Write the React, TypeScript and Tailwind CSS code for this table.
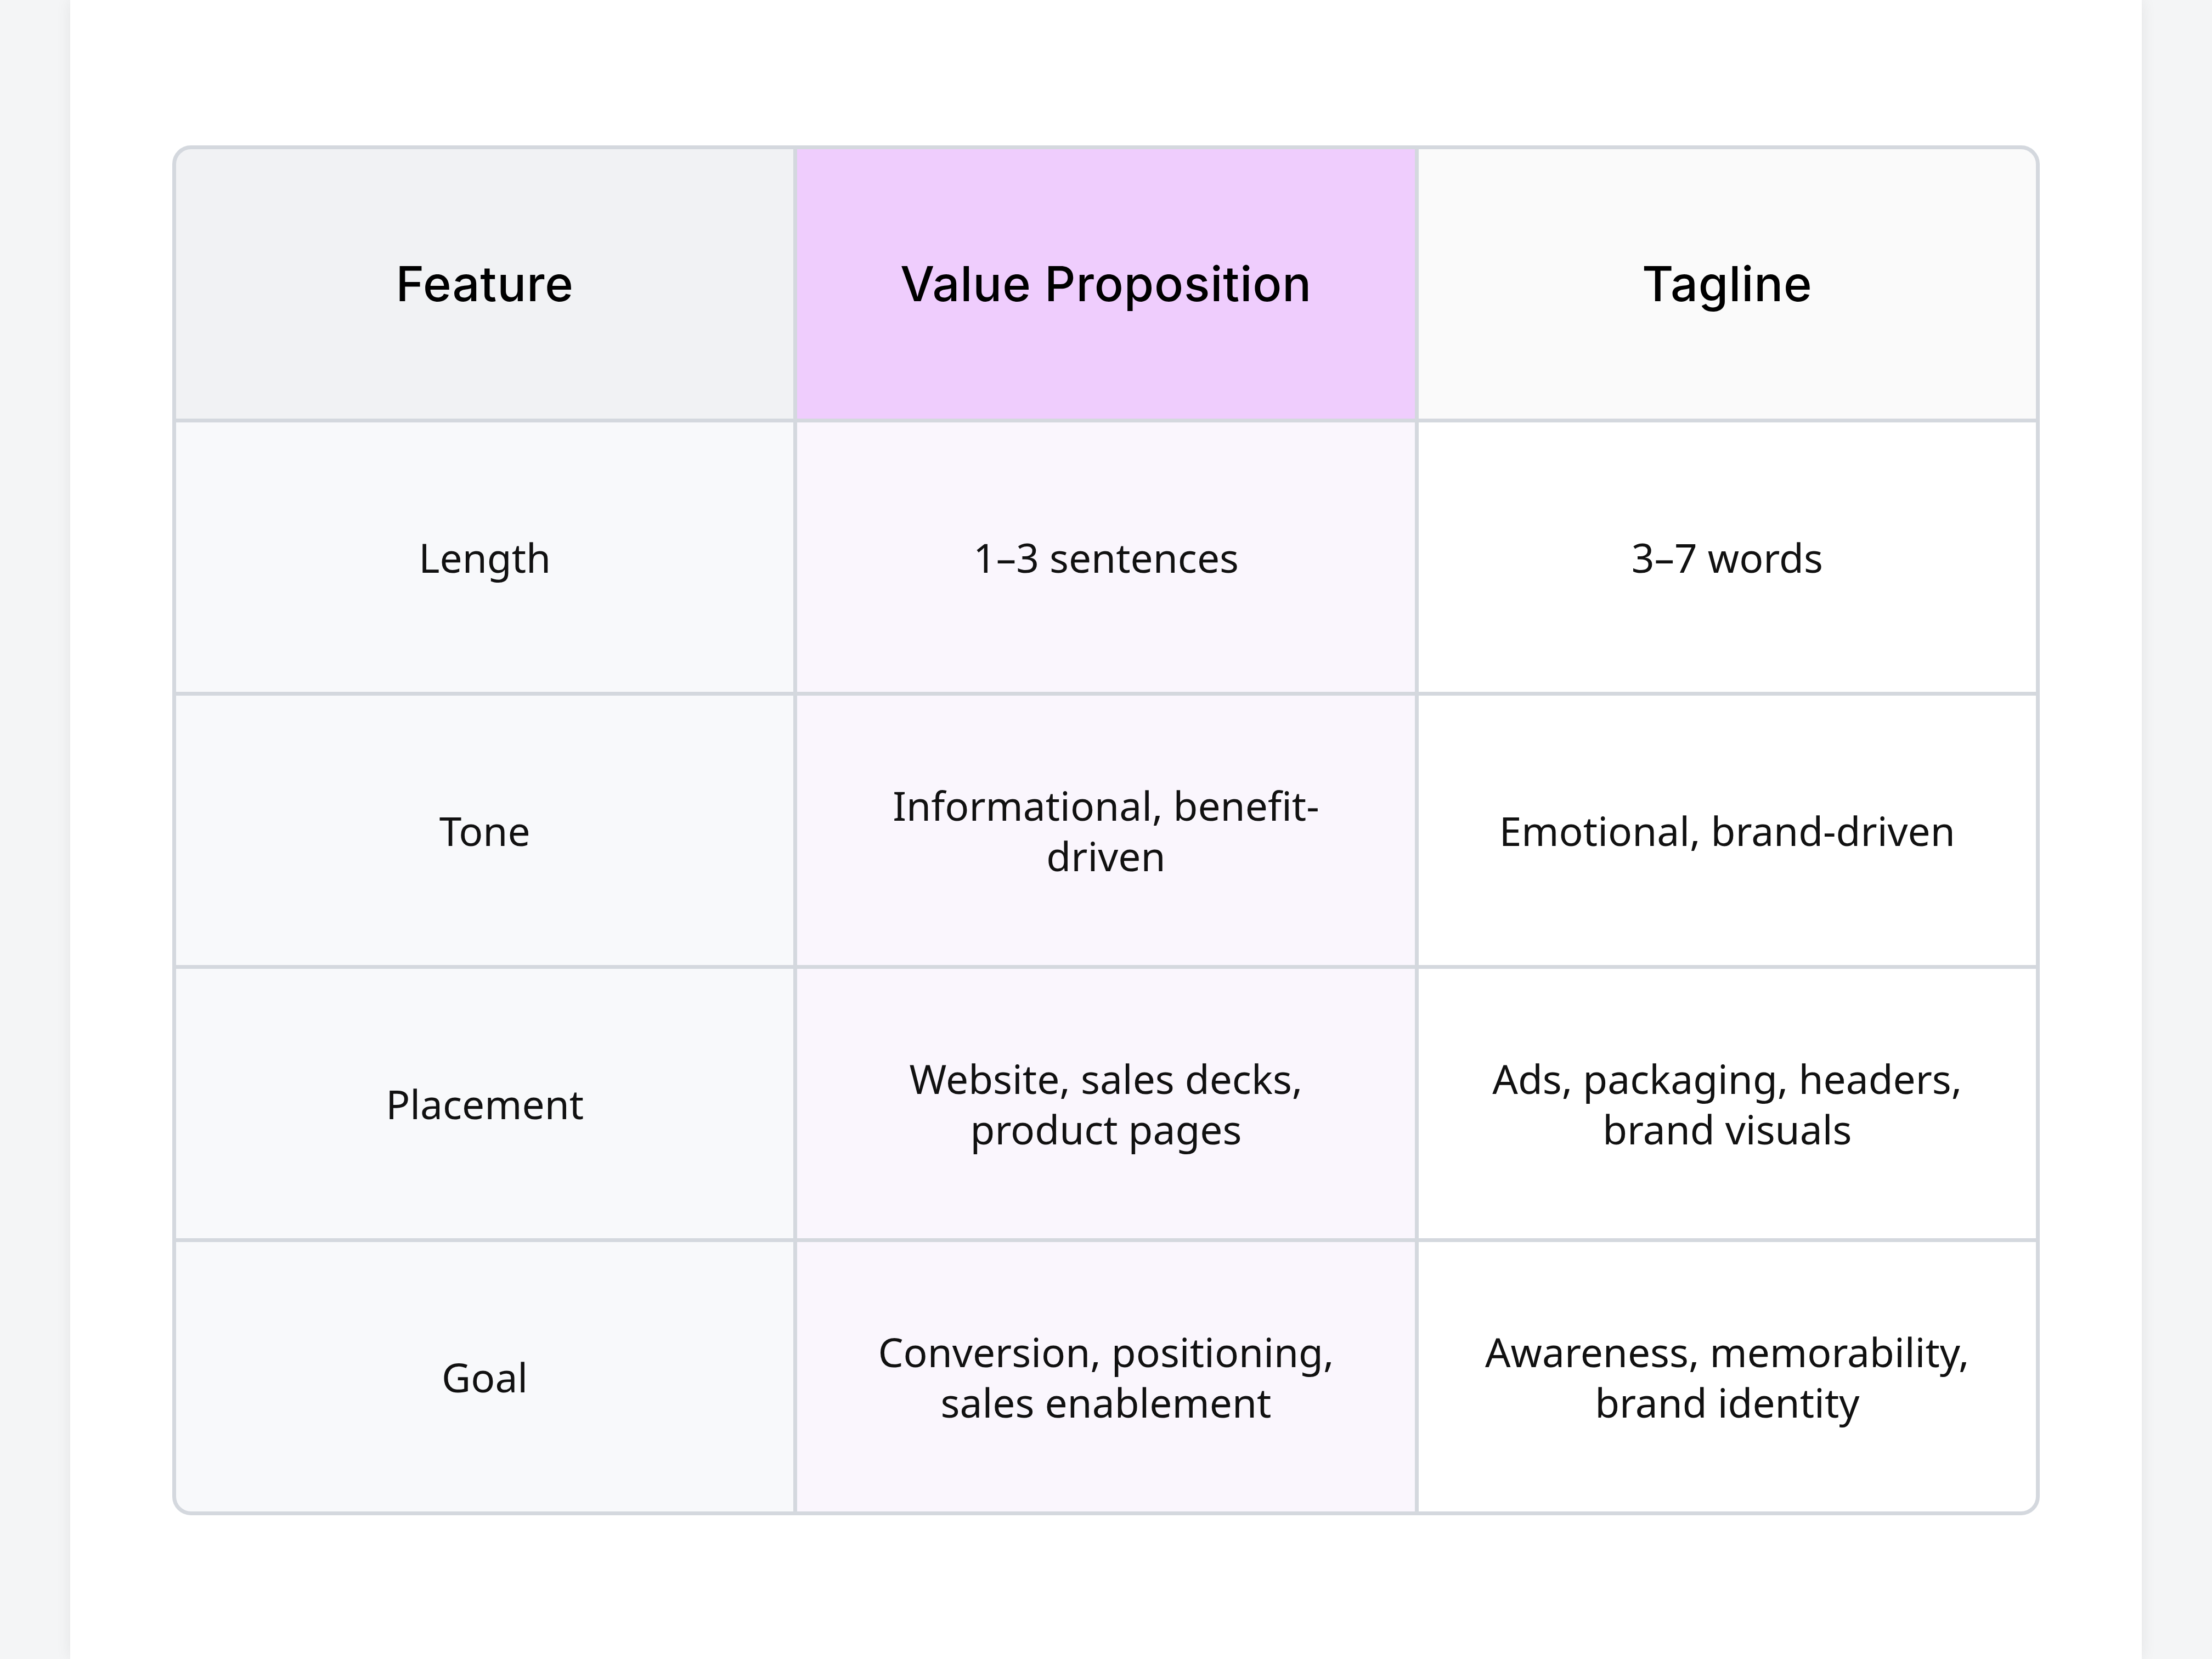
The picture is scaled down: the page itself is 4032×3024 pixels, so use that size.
const HEAD = ["Feature", "Value Proposition", "Tagline"];

const ROWS: [string, string, string][] = [
  ["Length", "1–3 sentences", "3–7 words"],
  ["Tone", "Informational, benefit-driven", "Emotional, brand-driven"],
  ["Placement", "Website, sales decks, product pages", "Ads, packaging, headers, brand visuals"],
  ["Goal", "Conversion, positioning, sales enablement", "Awareness, memorability, brand identity"],
];

const headBg = ["bg-[#f1f2f4]", "bg-[#efcdfd]", "bg-[#fafafa]"];
const bodyBg = ["bg-[#f8f9fb]", "bg-[#faf6fd]", "bg-white"];

export default function App() {
  return (
    <div className="min-h-screen bg-[#f4f5f6] flex justify-center">
      <div className="w-[3776px] min-h-screen bg-white shadow-[0_0_28px_rgba(0,0,0,0.07)] px-[186px] pt-[265px]">
        <div className="grid grid-cols-3 gap-[7px] bg-[#d4d8de] border-[7px] border-[#d4d8de] rounded-[34px] overflow-hidden">
          {HEAD.map((h, i) => (
            <div
              key={h}
              className={`h-[491px] flex items-center justify-center text-center px-[96px] text-black font-['Inter',sans-serif] font-medium text-[88px] tracking-[0.01em] leading-[1.1] ${headBg[i]}`}
            >
              {h}
            </div>
          ))}
          {ROWS.map((row) =>
            row.map((cell, i) => (
              <div
                key={row[0] + i}
                className={`h-[491px] flex items-center justify-center text-center px-[96px] text-[#111] font-['Noto_Sans',sans-serif] text-[73px] leading-[92px] ${bodyBg[i]}`}
              >
                {cell}
              </div>
            ))
          )}
        </div>
      </div>
    </div>
  );
}
